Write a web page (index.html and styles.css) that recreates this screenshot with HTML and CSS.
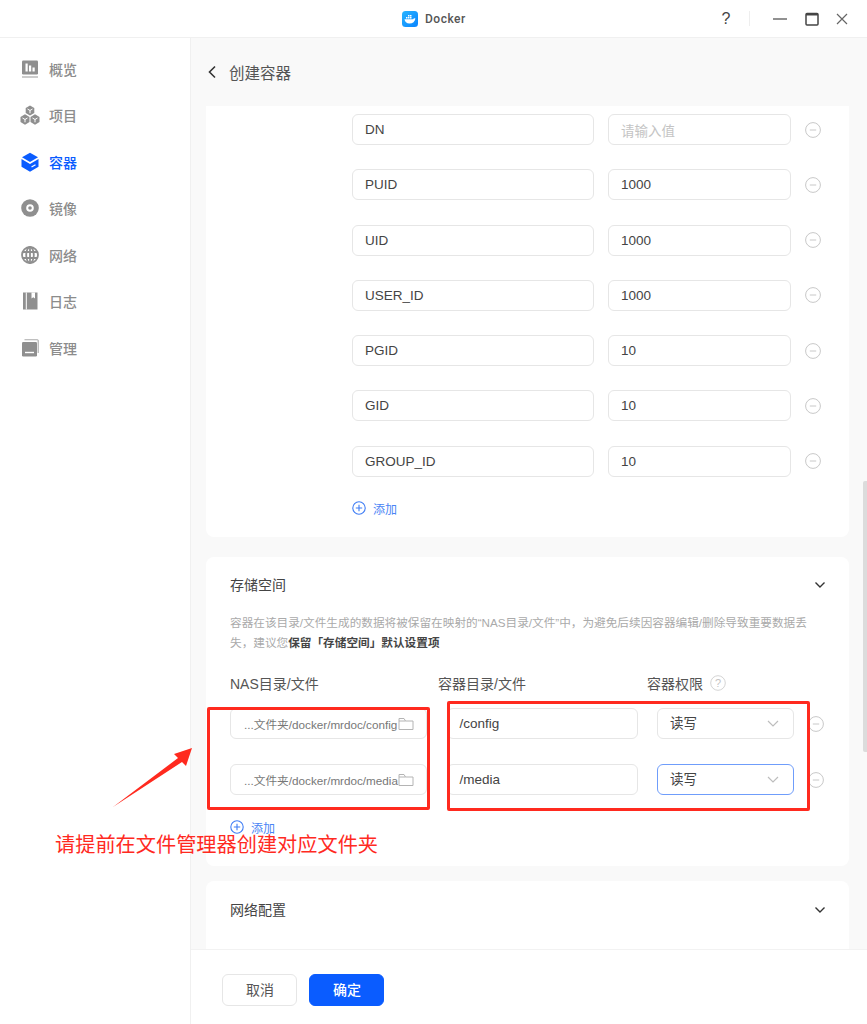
FILE: index.html
```html
<!DOCTYPE html>
<html lang="zh-CN">
<head>
<meta charset="utf-8">
<title>Docker</title>
<link rel="stylesheet" href="styles.css">
</head>
<body>
<div class="window">
  <header class="titlebar">
    <div class="brand">
      <svg class="logo" viewBox="0 0 16 16"><defs><linearGradient id="lg" x1="0" y1="0" x2="1" y2="1"><stop offset="0" stop-color="#28b4ff"/><stop offset="1" stop-color="#0a84ff"/></linearGradient></defs><rect width="16" height="16" rx="3.5" fill="url(#lg)"/><path d="M2.5 8.2h8.6c.5-.9 1.4-1 2.3-.7-.4 3-2.600 5-6 5-2.900 0-4.500-1.700-4.900-4.300z" fill="#fff"/><path d="M4 6h1.500v1.500H4zM6 6h1.500v1.500H6zM8 6h1.500v1.500H8zM6 4h1.500v1.500H6zM8 4h1.500v1.500H8z" fill="#fff"/></svg>
      <span class="brand-name">Docker</span>
    </div>
    <div class="win-tools">
      <span class="help">?</span>
      <span class="win-divider"></span>
      <svg class="win-icon min" viewBox="0 0 14 14"><path d="M0 7h14" stroke="#555" stroke-width="1.300"/></svg>
      <svg class="win-icon max" viewBox="0 0 14 14"><rect x="1" y="1.500" width="12" height="11.500" rx="1" fill="none" stroke="#444" stroke-width="1.500"/><path d="M1 2.500h12" stroke="#444" stroke-width="2"/></svg>
      <svg class="win-icon close" viewBox="0 0 14 14"><path d="M2 2l10 10M12 2L2 12" stroke="#666" stroke-width="1.200"/></svg>
    </div>
  </header>
  <div class="body-row">
    <nav class="sidebar">
      <a class="nav-item"><svg class="nav-icon" viewBox="0 0 20 20"><rect x="2" y="1.500" width="16" height="14" rx="1.200" fill="#8f8f8f"/><path d="M5.500 4.500h2.200v8H5.500zM9 6.500h2.200v6H9zM12.500 8.500h2.200v4h-2.200z" fill="#fff"/><path d="M2 18h16" stroke="#bbb" stroke-width="1.500"/></svg><span>概览</span></a>
      <a class="nav-item"><svg class="nav-icon" viewBox="0 0 20 20"><path d="M10 .5l4.300 2.500v5L10 10.500 5.700 8V3z" fill="#8f8f8f"/><path d="M5 9.300l4.500 2.600v5.200L5 19.700.5 17.100v-5.200z" fill="#8f8f8f"/><path d="M15 9.300l4.500 2.600v5.200L15 19.700l-4.500-2.600v-5.200z" fill="#8f8f8f"/><path d="M7.500 4L10 5.500 12.500 4M10 5.500V8.300M2.500 13L5 14.500 7.500 13M5 14.500V17.300M12.500 13l2.500 1.500 2.500-1.500M15 14.500V17.300" stroke="#fff" stroke-width="1" fill="none"/></svg><span>项目</span></a>
      <a class="nav-item active"><svg class="nav-icon" viewBox="0 0 20 20"><path d="M10 .8l8 4.500L10 10 2 5.300z" fill="#0a5cff"/><path d="M1.500 7l8.500 4.900L18.500 7v7.800L10 19.700l-8.500-4.900z" fill="#0a5cff"/><path d="M11.500 15l4-2.300" stroke="#fff" stroke-width="1.200"/></svg><span>容器</span></a>
      <a class="nav-item"><svg class="nav-icon" viewBox="0 0 20 20"><circle cx="10" cy="10" r="8.800" fill="#8f8f8f"/><circle cx="10" cy="10" r="3.800" fill="#fff"/><circle cx="10" cy="10" r="1.800" fill="#8f8f8f"/></svg><span>镜像</span></a>
      <a class="nav-item"><svg class="nav-icon" viewBox="0 0 20 20"><g fill="none" stroke="#8f8f8f" stroke-width="1.800"><circle cx="10" cy="10" r="8"/><ellipse cx="10" cy="10" rx="3.800" ry="8"/><path d="M2.500 7h15M2.500 13h15M10 2v16"/></g></svg><span>网络</span></a>
      <a class="nav-item"><svg class="nav-icon" viewBox="0 0 20 20"><path d="M3 1.500h14.500v17H3z" fill="#8f8f8f"/><path d="M6.300 1.500v17" stroke="#fff" stroke-width="1"/><path d="M11.500 1.500h3.500v6l-1.750-1.300L11.500 7.500z" fill="#fff"/></svg><span>日志</span></a>
      <a class="nav-item"><svg class="nav-icon" viewBox="0 0 20 20"><rect x="2" y="4" width="15" height="14.500" rx="1.200" fill="#8f8f8f"/><path d="M4.500 1.800h12.900a.8.8 0 0 1 .8.800V15" fill="none" stroke="#aaa" stroke-width="1.100"/><path d="M5 14.500h9" stroke="#fff" stroke-width="1.400"/></svg><span>管理</span></a>
    </nav>
    <main class="main">
      <div class="page-head">
        <svg class="back" viewBox="0 0 10 14"><path d="M8 1.500L2.500 7 8 12.500" fill="none" stroke="#333" stroke-width="1.600"/></svg>
        <h1>创建容器</h1>
      </div>
      <div class="scroller">
        <section class="card card-env">
          <div class="env-row"><div class="field key">DN</div><div class="field val placeholder">请输入值</div><svg class="minus" viewBox="0 0 16 16"><circle cx="8" cy="8" r="7.400"/><path d="M4.800 8h6.400"/></svg></div>
          <div class="env-row"><div class="field key">PUID</div><div class="field val">1000</div><svg class="minus" viewBox="0 0 16 16"><circle cx="8" cy="8" r="7.400"/><path d="M4.800 8h6.400"/></svg></div>
          <div class="env-row"><div class="field key">UID</div><div class="field val">1000</div><svg class="minus" viewBox="0 0 16 16"><circle cx="8" cy="8" r="7.400"/><path d="M4.800 8h6.400"/></svg></div>
          <div class="env-row"><div class="field key">USER_ID</div><div class="field val">1000</div><svg class="minus" viewBox="0 0 16 16"><circle cx="8" cy="8" r="7.400"/><path d="M4.800 8h6.400"/></svg></div>
          <div class="env-row"><div class="field key">PGID</div><div class="field val">10</div><svg class="minus" viewBox="0 0 16 16"><circle cx="8" cy="8" r="7.400"/><path d="M4.800 8h6.400"/></svg></div>
          <div class="env-row"><div class="field key">GID</div><div class="field val">10</div><svg class="minus" viewBox="0 0 16 16"><circle cx="8" cy="8" r="7.400"/><path d="M4.800 8h6.400"/></svg></div>
          <div class="env-row"><div class="field key">GROUP_ID</div><div class="field val">10</div><svg class="minus" viewBox="0 0 16 16"><circle cx="8" cy="8" r="7.400"/><path d="M4.800 8h6.400"/></svg></div>
          <a class="add add-env"><svg class="plus" viewBox="0 0 14 14"><circle cx="7" cy="7" r="6.200"/><path d="M3.800 7h6.400M7 3.800v6.400"/></svg><span>添加</span></a>
        </section>
        <section class="card card-storage">
          <div class="card-head"><h2>存储空间</h2><svg class="chev" viewBox="0 0 12 8"><path d="M1.500 1.500L6 6l4.500-4.500" fill="none" stroke="#333" stroke-width="1.400"/></svg></div>
          <p class="desc">容器在该目录/文件生成的数据将被保留在映射的“NAS目录/文件”中，为避免后续因容器编辑/删除导致重要数据丢失，建议您<b>保留「存储空间」默认设置项</b></p>
          <div class="vol-head">
            <span class="col-nas">NAS目录/文件</span><span class="col-dir">容器目录/文件</span>
            <span class="perm-label">容器权限<svg class="q" viewBox="0 0 16 16"><circle cx="8" cy="8" r="7.300"/><text x="8" y="11.500" text-anchor="middle">?</text></svg></span>
          </div>
          <div class="vol-grid vol-row">
            <div class="field nas"><span class="path">...文件夹/docker/mrdoc/config</span><svg class="folder" viewBox="0 0 16 14"><path d="M1 12.500V1.500h5l1.500 2.500H15v8.500zM1 4h6.500"/></svg></div>
            <div class="field">/config</div>
            <div class="field select"><span>读写</span><svg class="sel-chev" viewBox="0 0 12 7"><path d="M1 1l5 5 5-5"/></svg></div>
            <svg class="minus" viewBox="0 0 16 16"><circle cx="8" cy="8" r="7.400"/><path d="M4.800 8h6.400"/></svg>
          </div>
          <div class="vol-grid vol-row">
            <div class="field nas"><span class="path">...文件夹/docker/mrdoc/media</span><svg class="folder" viewBox="0 0 16 14"><path d="M1 12.500V1.500h5l1.500 2.500H15v8.500zM1 4h6.500"/></svg></div>
            <div class="field">/media</div>
            <div class="field select focus"><span>读写</span><svg class="sel-chev" viewBox="0 0 12 7"><path d="M1 1l5 5 5-5"/></svg></div>
            <svg class="minus" viewBox="0 0 16 16"><circle cx="8" cy="8" r="7.400"/><path d="M4.800 8h6.400"/></svg>
          </div>
          <a class="add add-vol"><svg class="plus" viewBox="0 0 14 14"><circle cx="7" cy="7" r="6.200"/><path d="M3.800 7h6.400M7 3.800v6.400"/></svg><span>添加</span></a>
        </section>
        <section class="card card-net">
          <div class="card-head"><h2>网络配置</h2><svg class="chev" viewBox="0 0 12 8"><path d="M1.500 1.500L6 6l4.500-4.500" fill="none" stroke="#333" stroke-width="1.400"/></svg></div>
        </section>
      </div>
      <footer class="footer">
        <button class="btn">取消</button>
        <button class="btn primary">确定</button>
      </footer>
    </main>
  </div>
  <div class="scroll-thumb"></div>
  <div class="mark mark-left"></div>
  <div class="mark mark-right"></div>
  <svg class="arrow" viewBox="0 0 90 70"><path d="M1 63L66 14L62 10L80 4L74 22L70 18z" fill="#ff2a1f"/></svg>
  <div class="note">请提前在文件管理器创建对应文件夹</div>
</div>
</body>
</html>
```

FILE: styles.css
```css
* { box-sizing: border-box; }
html, body { margin: 0; padding: 0; height: 100%; overflow: hidden; }
body {
  font-family: "Liberation Sans", "Noto Sans CJK SC", sans-serif;
  font-size: 14px;
  color: #444;
  background: #fff;
}
.window { position: relative; width: 867px; height: 1024px; display: flex; flex-direction: column; overflow: hidden; }

.titlebar {
  height: 38px; flex: none; background: #fff; border-bottom: 1px solid #f0f0f0;
  display: flex; align-items: center; justify-content: flex-end; position: relative;
  padding-right: 18px;
}
.brand { position: absolute; left: 402px; top: 11px; display: flex; align-items: center; gap: 7px; }
.logo { width: 16px; height: 16px; display: block; }
.brand-name { font-size: 12px; font-weight: 500; color: #555; letter-spacing: .5px; font-family: "Roboto", "Liberation Sans", sans-serif; }
.win-tools { display: flex; align-items: center; }
.help { font-size: 16px; color: #444; width: 10px; text-align: center; }
.win-divider { width: 1px; height: 15px; background: #eee; margin: 0 23px 0 18px; }
.win-icon { display: block; }
.win-icon.min { width: 14px; height: 14px; margin-right: 18px; }
.win-icon.max { width: 14px; height: 14px; margin-right: 16px; }
.win-icon.close { width: 14px; height: 14px; }

.body-row { flex: 1; display: flex; min-height: 0; }
.sidebar { width: 191px; flex: none; background: #fff; border-right: 1px solid #f0f0f0; padding-top: 7.500px; }
.nav-item { height: 46.500px; display: flex; align-items: center; padding-left: 20px; color: #8c8c8c; font-weight: 500; gap: 9px; }
.nav-item span { width: 30px; }
.nav-item.active { color: #0a5cff; }
.nav-icon { width: 20px; height: 20px; display: block; flex: none; }

.main { flex: 1; min-width: 0; display: flex; flex-direction: column; background: #f9f9f9; }
.page-head { height: 68px; flex: none; display: flex; align-items: center; padding: 0 0 1px 16px; gap: 12px; }
.back { width: 10px; height: 14px; display: block; }
h1 { margin: 0; font-size: 15.500px; font-weight: 400; color: #555; }

.scroller { flex: 1; min-height: 0; overflow: hidden; padding: 0 18px 0 15px; }
.card { background: #fff; border-radius: 8px; padding-left: 24px; padding-right: 18px; }
.card-env { height: 431px; border-radius: 0 0 8px 8px; padding-top: 8px; padding-left: 146px; margin-bottom: 20px; }
.env-row { display: flex; align-items: center; height: 31px; margin-bottom: 24.300px; }
.field {
  height: 31px; border: 1px solid #e6e6e6; border-radius: 6px; background: #fff;
  display: flex; align-items: center; padding-left: 12px; color: #444; font-size: 13.500px;
}
.key { width: 242px; margin-right: 14px; }
.val { width: 183px; }
.placeholder { color: #c4c4c4; }
.minus { width: 16px; height: 16px; display: block; flex: none; fill: none; stroke: #c8c8c8; stroke-width: 1; margin-left: 14px; }
.add { display: flex; align-items: center; gap: 7px; color: #4a84f5; font-size: 12px; height: 18px; }
.plus { width: 14px; height: 14px; display: block; fill: none; stroke: #3f7df5; stroke-width: 1.100; }
.add-env { margin-top: -2px; }

.card-storage { height: 309px; margin-bottom: 15px; padding-top: 18px; }
.card-head { height: 18px; display: flex; align-items: center; justify-content: space-between; padding-right: 5px; }
.card-head .chev { transform: translateY(1px); }
h2 { margin: 0; font-size: 14px; font-weight: 400; color: #444; }
.chev { width: 12px; height: 8px; display: block; }
.desc { margin: 20px 0 0; font-size: 11.650px; line-height: 20px; color: #aaa; width: 585px; }
.desc b { color: #444; font-weight: 700; }
.vol-grid { display: grid; grid-template-columns: 197px 191px 137px 16px; column-gap: 19.500px; align-items: center; }
.vol-head { margin-top: 20px; height: 20px; color: #555; display: flex; align-items: center; }
.col-nas { width: 208px; }
.col-dir { width: 209px; }
.perm-label { display: flex; align-items: center; gap: 7px; }
.q { width: 16px; height: 16px; display: block; fill: none; stroke: #d4d4d4; stroke-width: 1; }
.q text { fill: #c4c4c4; stroke: none; font-size: 11px; font-family: "Liberation Sans", sans-serif; }
.vol-row { margin-top: 15px; width: 620px; }
.vol-row + .vol-row { margin-top: 25px; }
.vol-row .minus { margin-left: -6px; }
.nas { padding-left: 13px; padding-right: 12px; justify-content: space-between; }
.path { font-size: 11.700px; color: #777; white-space: nowrap; }
.folder { width: 16px; height: 14px; display: block; flex: none; fill: none; stroke: #b4b4b4; stroke-width: 1; }
.select { justify-content: space-between; padding-right: 14px; }
.select span { transform: translateY(-2px); }
.select.focus { border-color: #6f9dfb; }
.sel-chev { width: 12px; height: 7px; display: block; fill: none; stroke: #bdbdbd; stroke-width: 1.200; }
.add-vol { margin-top: 23px; }

.card-net { height: 100px; padding-top: 19px; }

.footer { height: 75px; flex: none; background: #fff; border-top: 1px solid #f2f2f2; padding: 24px 0 0 31px; display: flex; gap: 12px; align-items: flex-start; position: relative; }
.btn { width: 75px; height: 32px; border: 1px solid #e6e6e6; border-radius: 6px; background: #fff; color: #555; font: 14px "Liberation Sans", "Noto Sans CJK SC", sans-serif; padding: 0 0 3px 1px; }
.btn.primary { background: #0a5cff; border-color: #0a5cff; color: #fff; font-weight: 500; }

.scroll-thumb { position: absolute; left: 863px; top: 481px; width: 4px; height: 271px; background: #dcdcdc; border-radius: 2px 0 0 2px; }
.mark { position: absolute; border: 3px solid #ff2a1f; border-radius: 2px; }
.mark-left { left: 207px; top: 707px; width: 223px; height: 103px; }
.mark-right { left: 447px; top: 701px; width: 363px; height: 110px; }
.arrow { position: absolute; left: 112px; top: 744px; width: 90px; height: 70px; }
.note { position: absolute; left: 55px; top: 830px; font-size: 20.200px; line-height: 30px; color: #ff2a1f; white-space: nowrap; }
```
